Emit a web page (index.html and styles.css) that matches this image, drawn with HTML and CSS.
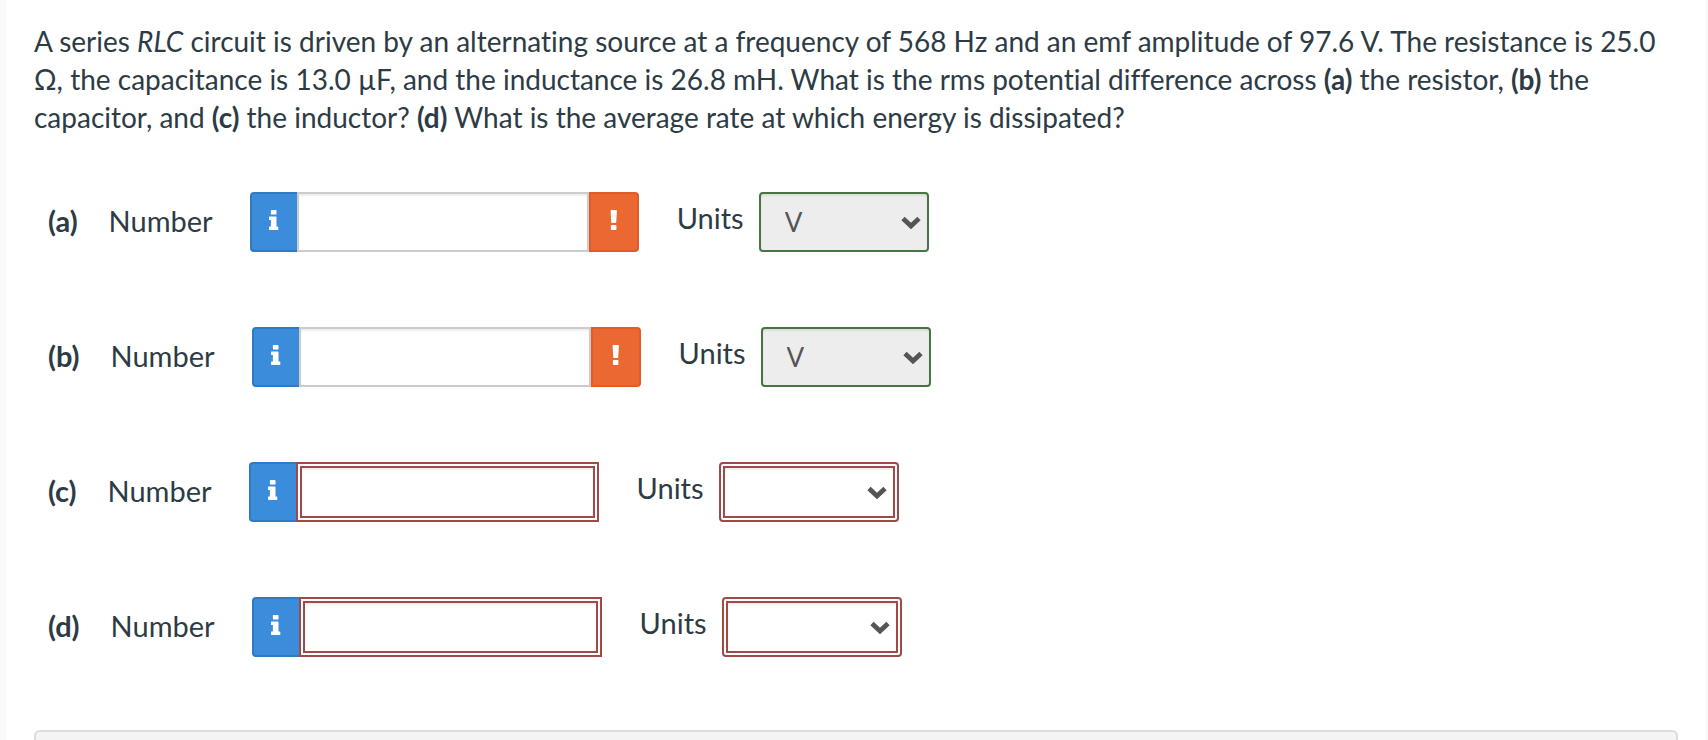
FILE: index.html
```html
<!DOCTYPE html>
<html lang="en">
<head>
<meta charset="utf-8">
<title>RLC circuit question</title>
<meta name="viewport" content="width=device-width, initial-scale=1">
<link rel="stylesheet" href="styles.css">
</head>
<body>
<svg class="sprite" aria-hidden="true">
  <symbol id="info" viewBox="0 0 10 20"><path d="M2.5 0h4.4q.6 0 .6.6v3.3q0 .6-.6.6H2.5q-.6 0-.6-.6V.6q0-.6.6-.6zM.6 6.6h6.2q.7 0 .7.7V16.400h1.200q.6 0 .6.6v2.400q0 .6-.6.6H.6q-.6 0-.6-.6V17q0-.6.6-.6h1.300V10H.6Q0 10 0 9.400V7.200q0-.6.6-.6z"/></symbol>
  <symbol id="alert" viewBox="0 0 10 20"><path d="M2.300 0h4.800q.8 0 .8.800L7.200 12.400q-.1.700-.7.700H3q-.6 0-.7-.7L1.600.8Q1.600 0 2.300 0zM2.500 15h4.200q.7 0 .7.700v3.600q0 .7-.7.700H2.500q-.6 0-.6-.7v-3.600q0-.7.6-.7z"/></symbol>
  <symbol id="chevron" viewBox="0 0 20 13"><path d="M2 2.500l8 7.500 8-7.500" fill="none" stroke="currentColor" stroke-width="4.800"/></symbol>
</svg>
<main class="page">
  <p class="question">A series <i>RLC</i> circuit is driven by an alternating source at a frequency of 568 Hz and an emf amplitude of 97.6 V. The resistance is 25.0 Ω, the capacitance is 13.0 µF, and the inductance is 26.8 mH. What is the rms potential difference across <b>(a)</b> the resistor, <b>(b)</b> the capacitor, and <b>(c)</b> the inductor? <b>(d)</b> What is the average rate at which energy is dissipated?</p>
  <form class="answers">
    <div class="answer">
      <b class="part">(a)</b>
      <label class="number" for="num-a">Number</label>
      <div class="field">
        <button class="addon info" type="button" aria-label="Info"><svg class="glyph"><use href="#info"/></svg></button>
        <input class="value" id="num-a" type="text">
        <button class="addon alert" type="button" aria-label="Incorrect"><svg class="glyph"><use href="#alert"/></svg></button>
      </div>
      <label class="units" for="unit-a">Units</label>
      <div class="picker">
        <select class="unit correct" id="unit-a" disabled><option>V</option></select>
        <svg class="chevron"><use href="#chevron"/></svg>
      </div>
    </div>
    <div class="answer">
      <b class="part">(b)</b>
      <label class="number" for="num-b">Number</label>
      <div class="field">
        <button class="addon info" type="button" aria-label="Info"><svg class="glyph"><use href="#info"/></svg></button>
        <input class="value" id="num-b" type="text">
        <button class="addon alert" type="button" aria-label="Incorrect"><svg class="glyph"><use href="#alert"/></svg></button>
      </div>
      <label class="units" for="unit-b">Units</label>
      <div class="picker">
        <select class="unit correct" id="unit-b" disabled><option>V</option></select>
        <svg class="chevron"><use href="#chevron"/></svg>
      </div>
    </div>
    <div class="answer">
      <b class="part">(c)</b>
      <label class="number" for="num-c">Number</label>
      <div class="field">
        <button class="addon info" type="button" aria-label="Info"><svg class="glyph"><use href="#info"/></svg></button>
        <input class="value missing" id="num-c" type="text">
      </div>
      <label class="units" for="unit-c">Units</label>
      <div class="picker">
        <select class="unit missing" id="unit-c"><option></option><option>V</option></select>
        <svg class="chevron inset"><use href="#chevron"/></svg>
      </div>
    </div>
    <div class="answer">
      <b class="part">(d)</b>
      <label class="number" for="num-d">Number</label>
      <div class="field">
        <button class="addon info" type="button" aria-label="Info"><svg class="glyph"><use href="#info"/></svg></button>
        <input class="value missing" id="num-d" type="text">
      </div>
      <label class="units" for="unit-d">Units</label>
      <div class="picker">
        <select class="unit missing" id="unit-d"><option></option><option>W</option></select>
        <svg class="chevron inset"><use href="#chevron"/></svg>
      </div>
    </div>
  </form>
  <section class="panel"></section>
</main>
</body>
</html>
```

FILE: styles.css
```css
* {
  box-sizing: border-box;
}

html {
  height: 100%;
}

body {
  height: 100%;
  margin: 0;
  overflow: hidden;
  color: #2d3b45;
  font: 28px/38px Lato, "Liberation Sans", sans-serif;
  font-variant-ligatures: none;
}

.sprite {
  display: none;
}

.page {
  display: flex;
  flex-direction: column;
  min-height: 100%;
  padding: 22px 28px 0;
  border-left: 6px solid #fafafa;
  border-right: 2px solid #fafafa;
  background: #fff;
}

.question {
  margin: 0;
}

.answers {
  display: flex;
  flex-direction: column;
  gap: 75px;
  margin: 56px 0 73px;
  padding-left: 14px;
  font-size: 29px;
}

.answer {
  display: flex;
  align-items: stretch;
  height: 60px;
}

.part,
.number {
  padding-top: 10px;
}

.number {
  margin: 0 37px 0 31px;
}

.field {
  display: flex;
}

.addon {
  display: flex;
  align-items: center;
  justify-content: center;
  padding: 0 0 4px;
  color: #fff;
}

.info {
  width: 47px;
  border: 2px solid #2f7bc3;
  border-right: 0;
  border-radius: 4px 0 0 4px;
  background: #3b8ddc;
}

.alert {
  width: 50px;
  border: 2px solid #e25c29;
  border-radius: 0 4px 4px 0;
  background: #eb6831;
}

.glyph {
  width: 10px;
  height: 20px;
  fill: currentColor;
}

.value {
  width: 292px;
  padding: 0 20px;
  border: 2px solid #ccc;
  border-radius: 0;
  background: #fff;
  box-shadow: inset 0 2px 2px rgba(0, 0, 0, 0.07);
  color: inherit;
  font: inherit;
}

.units {
  padding: 7px 15px 0 38px;
}

.picker {
  display: grid;
}

.unit,
.chevron {
  grid-area: 1 / 1;
}

.unit {
  appearance: none;
  width: 170px;
  padding: 0 44px 0 24px;
  border-radius: 4px;
  background: #fff;
  box-shadow: inset 0 2px 2px rgba(0, 0, 0, 0.07);
  color: #555;
  font: 26px/32px Lato, "Liberation Sans", sans-serif;
  opacity: 1;
}

.correct {
  border: 2px solid #467541;
  background: #ededed;
}

.missing {
  border: 6px double #a04a47;
}

.value.missing {
  width: 303px;
}

.unit.missing {
  width: 180px;
}

.chevron {
  place-self: center end;
  width: 20px;
  height: 13px;
  margin-right: 8px;
  color: #555;
  pointer-events: none;
}

.chevron.inset {
  margin-right: 12px;
}

.panel {
  flex: 1;
  min-height: 10px;
  border: 2px solid #dcdcdc;
  border-bottom: 0;
  border-radius: 6px 6px 0 0;
  background: #f4f4f4;
}
```
